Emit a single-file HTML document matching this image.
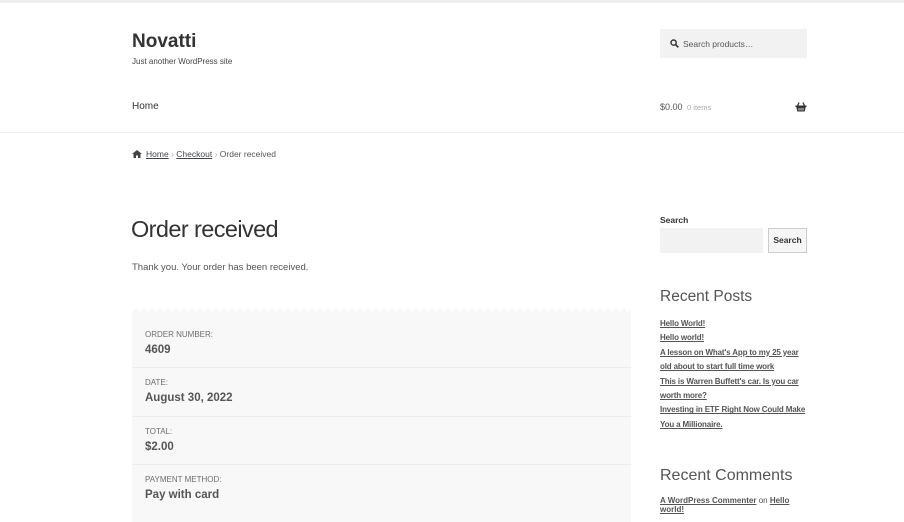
<!DOCTYPE html>
<html><head><meta charset="utf-8"><style>
*{margin:0;padding:0;box-sizing:border-box}
body{width:904px;height:522px;overflow:hidden;background:#fff;font-family:"Liberation Sans",sans-serif;color:#43454b;position:relative}
.a{position:absolute;white-space:nowrap}
a{color:#43454b}
.lbl{font-size:8px;color:#6d6d6d;letter-spacing:0}
.val{font-size:11.5px;font-weight:bold;color:#555}
.side{font-size:8px;line-height:14.4px}
.side a{font-weight:bold;color:#555}
</style></head><body>
<div class="a" style="left:0;top:0;width:904px;height:3px;background:#eee"></div>
<div class="a" style="left:132px;top:31px;font-size:19px;font-weight:bold;color:#333">Novatti</div>
<div class="a" style="left:132px;top:57px;font-size:8px;color:#444">Just another WordPress site</div>
<div class="a" style="left:660px;top:29px;width:147px;height:29px;background:#f2f2f2"></div>
<svg class="a" style="left:670px;top:39px" width="9" height="9" viewBox="0 0 9 9"><circle cx="3.6" cy="3.6" r="2.6" fill="none" stroke="#333" stroke-width="1.4"/><path d="M5.5 5.5L8.3 8.3" stroke="#333" stroke-width="1.6"/></svg>
<div class="a" style="left:683px;top:39px;font-size:8.5px;color:#555">Search products…</div>
<div class="a" style="left:132px;top:101px;font-size:10px;color:#333">Home</div>
<div class="a" style="left:660px;top:102px;font-size:9px;color:#555">$0.00 <span style="font-size:7.5px;color:#aaa;margin-left:2px">0 items</span></div>
<svg class="a" style="left:795px;top:102px" width="12" height="10" viewBox="0 0 12 10"><path d="M4 0.5L2.5 4M8 0.5L9.5 4" stroke="#333" stroke-width="1.3"/><path d="M0.5 3.5H11.5V5H0.5Z" fill="#333"/><path d="M1.3 5H10.7L9.7 9.5H2.3Z" fill="#333"/><path d="M4 6v2.5M6 6v2.5M8 6v2.5" stroke="#fff" stroke-width="0.8"/></svg>
<div class="a" style="left:0;top:132px;width:904px;height:1px;background:#eee"></div>
<svg class="a" style="left:132px;top:150px" width="10" height="8" viewBox="0 0 10 8"><path d="M5 0L0 4h1.5v4h2.5V5.5h2V8h2.5V4H10Z" fill="#444"/></svg>
<div class="a" style="left:146px;top:149px;font-size:8.5px;color:#555"><a href="#">Home</a> <span style="color:#aaa">›</span> <a href="#">Checkout</a> <span style="color:#aaa">›</span> Order received</div>
<div class="a" style="left:131px;top:216px;font-size:23.5px;color:#333;letter-spacing:-0.6px">Order received</div>
<div class="a" style="left:132px;top:262px;font-size:9.5px;color:#555">Thank you. Your order has been received.</div>
<svg class="a" style="left:132px;top:306px" width="499" height="6"><defs><pattern id="z" width="8" height="6" patternUnits="userSpaceOnUse"><path d="M0 6L4 2L8 6Z" fill="#f8f8f8"/></pattern></defs><rect width="499" height="6" fill="url(#z)"/></svg>
<div class="a" style="left:132px;top:312px;width:499px;height:210px;background:#f8f8f8"></div>
<div class="a" style="left:132px;top:367px;width:499px;height:1px;background:#ececec"></div>
<div class="a" style="left:132px;top:416px;width:499px;height:1px;background:#ececec"></div>
<div class="a" style="left:132px;top:464px;width:499px;height:1px;background:#ececec"></div>
<div class="a lbl" style="left:145px;top:330px">ORDER NUMBER:</div>
<div class="a val" style="left:145px;top:344px">4609</div>
<div class="a lbl" style="left:145px;top:378px">DATE:</div>
<div class="a val" style="left:145px;top:392px">August 30, 2022</div>
<div class="a lbl" style="left:145px;top:427px">TOTAL:</div>
<div class="a val" style="left:145px;top:441px">$2.00</div>
<div class="a lbl" style="left:145px;top:475px">PAYMENT METHOD:</div>
<div class="a val" style="left:145px;top:489px">Pay with card</div>
<div class="a" style="left:660px;top:215px;font-size:8.5px;font-weight:bold;color:#333">Search</div>
<div class="a" style="left:660px;top:228px;width:103px;height:25px;background:#f2f2f2"></div>
<div class="a" style="left:768px;top:228px;width:39px;height:25px;background:#f6f6f6;border:1px solid #ccc;font-size:8.5px;font-weight:bold;color:#333;text-align:center;line-height:23px">Search</div>
<div class="a" style="left:660px;top:288px;font-size:15.5px;color:#555">Recent Posts</div>
<div class="a side" style="left:660px;top:317px;white-space:normal;width:152px;letter-spacing:-0.15px">
<a href="#">Hello World!</a><br><a href="#">Hello world!</a><br><a href="#">A lesson on What's App to my 25 year old about to start full time work</a><br><a href="#">This is Warren Buffett's car. Is you car worth more?</a><br><a href="#">Investing in ETF Right Now Could Make You a Millionaire.</a></div>
<div class="a" style="left:660px;top:467px;font-size:16px;color:#555">Recent Comments</div>
<div class="a" style="left:660px;top:496px;white-space:normal;width:150px;line-height:9px;font-size:8px;color:#555"><a href="#" style="font-weight:bold;color:#555">A WordPress Commenter</a> on <a href="#" style="font-weight:bold;color:#555">Hello world!</a></div>
</body></html>
